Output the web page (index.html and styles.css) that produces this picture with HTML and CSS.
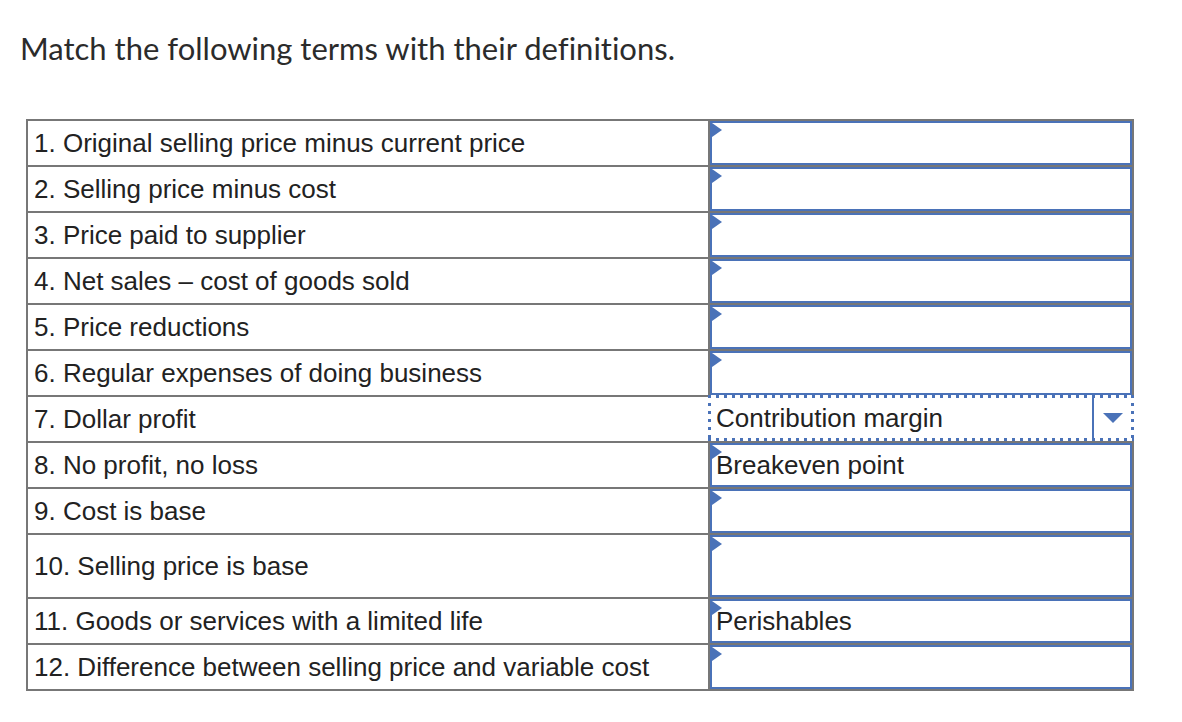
FILE: index.html
```html
<!DOCTYPE html>
<html lang="en">
<head>
<meta charset="utf-8">
<title>Match the following terms</title>
<link rel="stylesheet" href="styles.css">
</head>
<body>
<div class="page">
  <p class="prompt">Match the following terms with their definitions.</p>
  <div class="match">
    <div class="term">1. Original selling price minus current price</div>
    <div class="answer"><div class="select"></div></div>

    <div class="term">2. Selling price minus cost</div>
    <div class="answer"><div class="select"></div></div>

    <div class="term">3. Price paid to supplier</div>
    <div class="answer"><div class="select"></div></div>

    <div class="term">4. Net sales – cost of goods sold</div>
    <div class="answer"><div class="select"></div></div>

    <div class="term">5. Price reductions</div>
    <div class="answer"><div class="select"></div></div>

    <div class="term">6. Regular expenses of doing business</div>
    <div class="answer"><div class="select"></div></div>

    <div class="term">7. Dollar profit</div>
    <div class="answer"><div class="select focused"><span class="value">Contribution margin</span><span class="arrow"></span></div></div>

    <div class="term">8. No profit, no loss</div>
    <div class="answer"><div class="select"><span class="value">Breakeven point</span></div></div>

    <div class="term">9. Cost is base</div>
    <div class="answer"><div class="select"></div></div>

    <div class="term tall">10. Selling price is base</div>
    <div class="answer tall"><div class="select"></div></div>

    <div class="term">11. Goods or services with a limited life</div>
    <div class="answer"><div class="select"><span class="value">Perishables</span></div></div>

    <div class="term">12. Difference between selling price and variable cost</div>
    <div class="answer"><div class="select"></div></div>
  </div>
</div>
</body>
</html>
```

FILE: styles.css
```css
:root {
  --grid: #777777;
  --blue: #4a72b8;
  --ink: #222222;
}

body {
  margin: 0;
  background: #ffffff;
  font-family: "Liberation Sans", Arial, sans-serif;
  color: var(--ink);
}

.page {
  padding: 30px 0 0 20px;
}

.prompt {
  margin: 0;
  font-family: Lato, "Open Sans", sans-serif;
  font-size: 31px;
  line-height: 36px;
  font-weight: 400;
  color: #2b2b2b;
  font-variant-ligatures: none;
}

.match {
  display: grid;
  grid-template-columns: 682px 424px;
  width: 1106px;
  margin: 53px 0 0 6px;
  border-top: 2px solid var(--grid);
  border-left: 2px solid var(--grid);
}

.term,
.answer {
  height: 44px;
  border-right: 2px solid var(--grid);
  border-bottom: 2px solid var(--grid);
}

.term.tall,
.answer.tall {
  height: 62px;
}

.term {
  display: flex;
  align-items: center;
  padding-left: 6px;
  font-size: 26px;
  white-space: nowrap;
}

.select {
  box-sizing: border-box;
  position: relative;
  height: 100%;
  display: flex;
  align-items: center;
  padding-left: 4px;
  border: 2px solid var(--blue);
  background: #ffffff;
  font-size: 26px;
  white-space: nowrap;
}

.select::before {
  content: "";
  position: absolute;
  left: 0;
  top: 0;
  border-left: 10px solid var(--blue);
  border-top: 7px solid transparent;
  border-bottom: 7px solid transparent;
}

.select.focused {
  z-index: 1;
  height: 46px;
  margin: -2px -2px 0 -2px;
  padding: 3px 3px 3px 8px;
  border: none;
  background:
    linear-gradient(to right, var(--blue) 3px, transparent 3px) 0 0 / 8px 3px repeat-x,
    linear-gradient(to right, var(--blue) 3px, transparent 3px) 0 100% / 8px 3px repeat-x,
    linear-gradient(to bottom, var(--blue) 3px, transparent 3px) 0 0 / 3px 8px repeat-y,
    linear-gradient(to bottom, var(--blue) 3px, transparent 3px) 100% 0 / 3px 8px repeat-y,
    #ffffff;
}

.select.focused::before {
  content: none;
}

.arrow {
  box-sizing: border-box;
  align-self: stretch;
  width: 39px;
  margin-left: auto;
  display: flex;
  align-items: center;
  justify-content: center;
  border-left: 2px solid var(--blue);
}

.arrow::after {
  content: "";
  border-top: 10px solid var(--blue);
  border-left: 10px solid transparent;
  border-right: 10px solid transparent;
}
```
